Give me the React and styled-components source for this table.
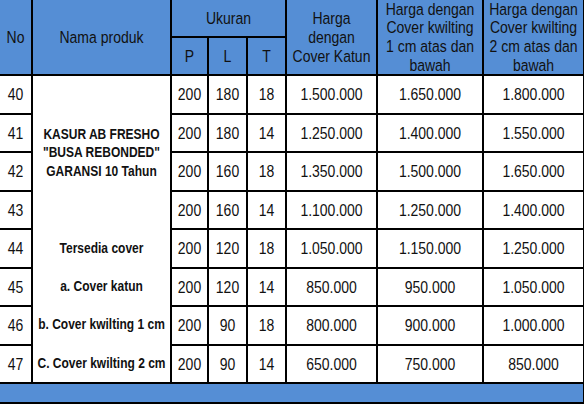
import styled, { createGlobalStyle } from "styled-components";

const Global = createGlobalStyle`
  html, body { margin: 0; padding: 0; background: #fff; }
  body { font-family: "Liberation Sans", Arial, sans-serif; color: #111; }
`;

const BLUE = "#558ed5";

const Table = styled.table`
  width: 584px;
  table-layout: fixed;
  border-collapse: collapse;
  font-size: 14px;
`;

const Head = styled.th`
  background: ${BLUE};
  border: 2px solid #000;
  border-top: none;
  ${(p) => (p.$first ? "border-left: none;" : "")}
  font-weight: normal;
  text-align: center;
  vertical-align: middle;
  padding: 0;
  line-height: 16px;
  height: 36px;
`;

const Cell = styled.td`
  border: 2px solid #000;
  ${(p) => (p.$first ? "border-left: none;" : "")}
  text-align: center;
  vertical-align: middle;
  padding: 0;
  height: 36.5px;
  background: #fff;
`;

const Tall = styled.span`
  display: inline-block;
  transform: scaleY(1.18);
`;

const NameCell = styled.td`
  border: 2px solid #000;
  padding: 0;
  vertical-align: top;
  background: #fff;
`;

const NameGrid = styled.div`
  height: 306px;
  display: grid;
  grid-template-rows: repeat(8, 1fr);
  font-weight: bold;
  font-size: 12px;
  text-align: center;
`;

const NameLine = styled.div`
  grid-row: ${(p) => p.$row};
  display: flex;
  flex-direction: column;
  align-items: center;
  justify-content: center;
  line-height: 18.5px;
  white-space: nowrap;
`;

const Footer = styled.td`
  background: ${BLUE};
  border: 2px solid #000;
  border-left: none;
  height: 17.5px;
  padding: 0;
`;

const rows = [
  [40, 200, 180, 18, "1.500.000", "1.650.000", "1.800.000"],
  [41, 200, 180, 14, "1.250.000", "1.400.000", "1.550.000"],
  [42, 200, 160, 18, "1.350.000", "1.500.000", "1.650.000"],
  [43, 200, 160, 14, "1.100.000", "1.250.000", "1.400.000"],
  [44, 200, 120, 18, "1.050.000", "1.150.000", "1.250.000"],
  [45, 200, 120, 14, "850.000", "950.000", "1.050.000"],
  [46, 200, 90, 18, "800.000", "900.000", "1.000.000"],
  [47, 200, 90, 14, "650.000", "750.000", "850.000"],
];

function ProductName() {
  return (
    <NameGrid>
      <NameLine $row="2 / 4">
        <Tall>KASUR AB FRESHO</Tall>
        <Tall>"BUSA REBONDED"</Tall>
        <Tall>GARANSI 10 Tahun</Tall>
      </NameLine>
      <NameLine $row="5"><Tall>Tersedia cover</Tall></NameLine>
      <NameLine $row="6"><Tall>a. Cover katun</Tall></NameLine>
      <NameLine $row="7"><Tall>b. Cover kwilting 1 cm</Tall></NameLine>
      <NameLine $row="8"><Tall>C. Cover kwilting 2 cm</Tall></NameLine>
    </NameGrid>
  );
}

export default function App() {
  return (
    <>
      <Global />
      <Table>
        <colgroup>
          <col style={{ width: 32 }} />
          <col style={{ width: 139 }} />
          <col style={{ width: 37 }} />
          <col style={{ width: 39 }} />
          <col style={{ width: 39 }} />
          <col style={{ width: 91 }} />
          <col style={{ width: 106 }} />
          <col style={{ width: 101 }} />
        </colgroup>
        <thead>
          <tr>
            <Head rowSpan={2} $first><Tall>No</Tall></Head>
            <Head rowSpan={2}><Tall>Nama produk</Tall></Head>
            <Head colSpan={3}><Tall>Ukuran</Tall></Head>
            <Head rowSpan={2}>
              <Tall>Harga<br />dengan<br />Cover Katun</Tall>
            </Head>
            <Head rowSpan={2}>
              <Tall>Harga dengan<br />Cover kwilting<br />1 cm atas dan<br />bawah</Tall>
            </Head>
            <Head rowSpan={2}>
              <Tall>Harga dengan<br />Cover kwilting<br />2 cm atas dan<br />bawah</Tall>
            </Head>
          </tr>
          <tr>
            <Head><Tall>P</Tall></Head>
            <Head><Tall>L</Tall></Head>
            <Head><Tall>T</Tall></Head>
          </tr>
        </thead>
        <tbody>
          {rows.map((r, i) => (
            <tr key={r[0]}>
              <Cell $first><Tall>{r[0]}</Tall></Cell>
              {i === 0 && (
                <NameCell rowSpan={8}>
                  <ProductName />
                </NameCell>
              )}
              {r.slice(1).map((v, j) => (
                <Cell key={j}><Tall>{v}</Tall></Cell>
              ))}
            </tr>
          ))}
          <tr>
            <Footer colSpan={8} />
          </tr>
        </tbody>
      </Table>
    </>
  );
}
